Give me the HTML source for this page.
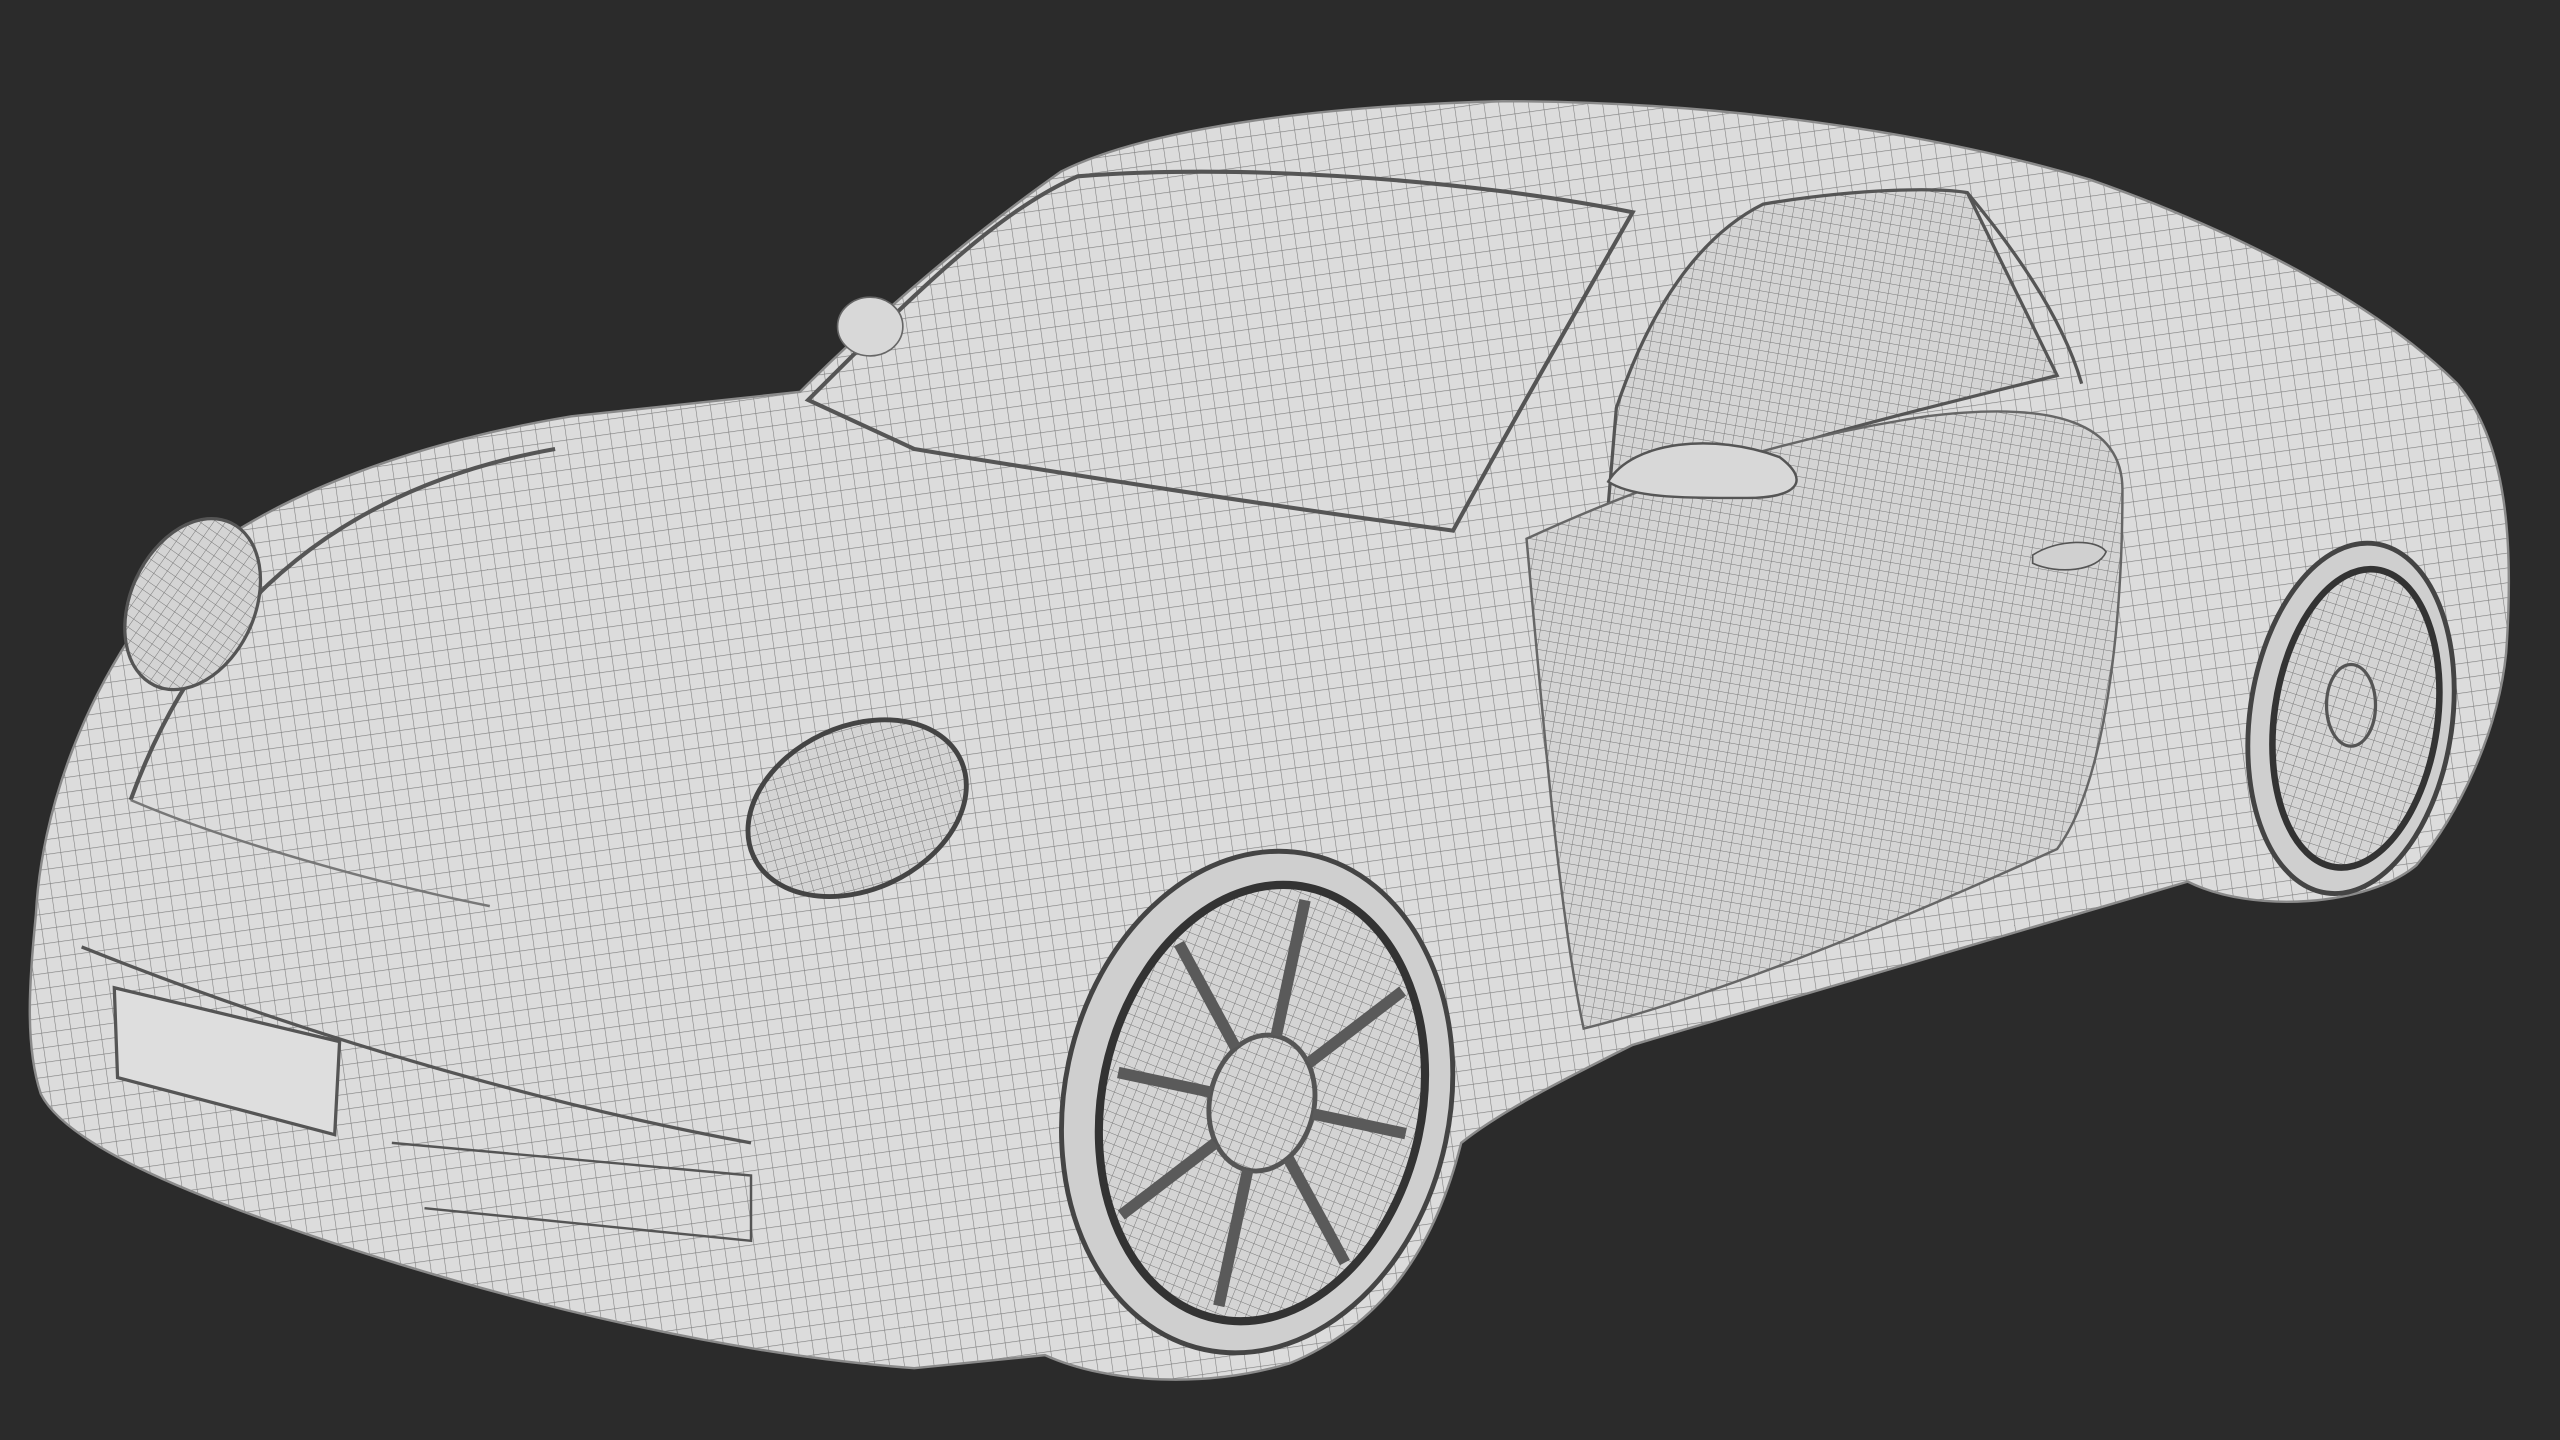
<!DOCTYPE html>
<html><head><meta charset="utf-8"><style>
html,body{margin:0;padding:0;background:#2b2b2b;width:2560px;height:1440px;overflow:hidden}
svg{display:block}
</style></head><body>
<svg width="2560" height="1440" viewBox="0 0 1568 882" preserveAspectRatio="none" xmlns="http://www.w3.org/2000/svg">
<defs>
<pattern id="g" width="9" height="9" patternUnits="userSpaceOnUse" patternTransform="rotate(-8)">
<rect width="9" height="9" fill="#dcdcdc"/>
<path d="M0 0H9M0 0V9" stroke="#7e7e7e" stroke-width="0.7"/>
</pattern>
<pattern id="g2" width="6" height="6" patternUnits="userSpaceOnUse" patternTransform="rotate(10)">
<rect width="6" height="6" fill="#d4d4d4"/>
<path d="M0 0H6M0 0V6" stroke="#777" stroke-width="0.6"/>
</pattern>
</defs>
<rect width="1568" height="882" fill="#2b2b2b"/>
<path d="M22 560 C25 500 50 420 110 350 C170 300 260 270 350 255 L490 240 C540 190 600 140 650 105 C700 80 800 65 920 62 C1050 62 1180 80 1280 110 C1380 145 1460 190 1505 235 C1535 270 1540 330 1535 400 C1530 450 1505 500 1480 530 C1450 555 1380 560 1340 540 L1000 640 C960 660 920 680 895 700 C880 760 850 810 790 835 C740 850 680 848 640 830 L560 838 C450 830 320 800 200 760 C110 730 40 700 25 670 C15 640 18 600 22 560 Z" fill="url(#g)" stroke="#8a8a8a" stroke-width="1.5"/>
<path d="M495 245 C560 180 610 130 660 108 C760 100 900 110 1000 130 C960 200 920 270 890 325 C780 310 650 290 560 275 Z" fill="url(#g)" stroke="#555" stroke-width="2.5"/>
<path d="M990 250 C1010 190 1040 145 1080 125 C1140 115 1190 115 1205 118 L1260 230 C1200 245 1130 262 1100 272 C1060 280 1010 300 985 310 Z" fill="url(#g2)" stroke="#555" stroke-width="2"/>
<path d="M1205 118 C1240 160 1265 200 1275 235" stroke="#555" stroke-width="2" fill="none"/>
<path d="M935 330 C1000 300 1080 270 1180 255 C1260 245 1300 260 1300 300 C1300 380 1290 480 1260 520 C1150 570 1050 610 970 630 C955 560 945 440 935 330 Z" fill="url(#g2)" stroke="#666" stroke-width="1.5"/>
<path d="M985 295 C1000 270 1050 265 1090 280 C1110 295 1100 305 1070 305 C1030 305 1000 305 985 295 Z" fill="#d8d8d8" stroke="#555" stroke-width="1.5"/>
<ellipse cx="533" cy="200" rx="20" ry="18" fill="#d8d8d8" stroke="#666"/>
<path d="M80 490 C120 380 200 300 340 275" stroke="#555" stroke-width="2.5" fill="none"/>
<path d="M80 490 C150 520 250 545 300 555" stroke="#777" stroke-width="1.5" fill="none"/>
<ellipse cx="525" cy="495" rx="70" ry="50" transform="rotate(-25 525 495)" fill="url(#g2)" stroke="#444" stroke-width="3"/>
<ellipse cx="118" cy="370" rx="38" ry="55" transform="rotate(25 118 370)" fill="url(#g2)" stroke="#555" stroke-width="2"/>
<path d="M70 605 L208 638 L205 695 L72 660 Z" fill="#dedede" stroke="#555" stroke-width="2"/>
<path d="M50 580 C200 640 350 680 460 700" stroke="#555" stroke-width="2" fill="none"/>
<path d="M240 700 L460 720 L460 760 L260 740" fill="none" stroke="#555" stroke-width="1.5"/>
<g transform="rotate(12 770 675)">
<ellipse cx="770" cy="675" rx="118" ry="155" fill="#cfcfcf" stroke="#444" stroke-width="3"/>
<ellipse cx="773" cy="675" rx="98" ry="135" fill="url(#g2)" stroke="#333" stroke-width="5"/>
<ellipse cx="773" cy="675" rx="32" ry="42" fill="none" stroke="#555" stroke-width="3"/>
<g stroke="#5a5a5a" stroke-width="7" fill="none">
<path d="M773 633 V548 M773 717 V802 M741 675 H683 M805 675 H863 M750 645 L703 590 M796 645 L843 590 M750 705 L703 760 M796 705 L843 760"/>
</g>
</g>
<ellipse cx="1440" cy="440" rx="62" ry="108" transform="rotate(8 1440 440)" fill="#cfcfcf" stroke="#444" stroke-width="3"/>
<ellipse cx="1443" cy="440" rx="50" ry="92" transform="rotate(8 1443 440)" fill="url(#g2)" stroke="#333" stroke-width="4"/>
<ellipse cx="1440" cy="432" rx="15" ry="25" fill="none" stroke="#555" stroke-width="2"/>
<path d="M1245 340 C1260 330 1285 330 1290 338 C1285 350 1260 352 1245 345 Z" fill="#d0d0d0" stroke="#555"/>
</svg>
</body></html>
